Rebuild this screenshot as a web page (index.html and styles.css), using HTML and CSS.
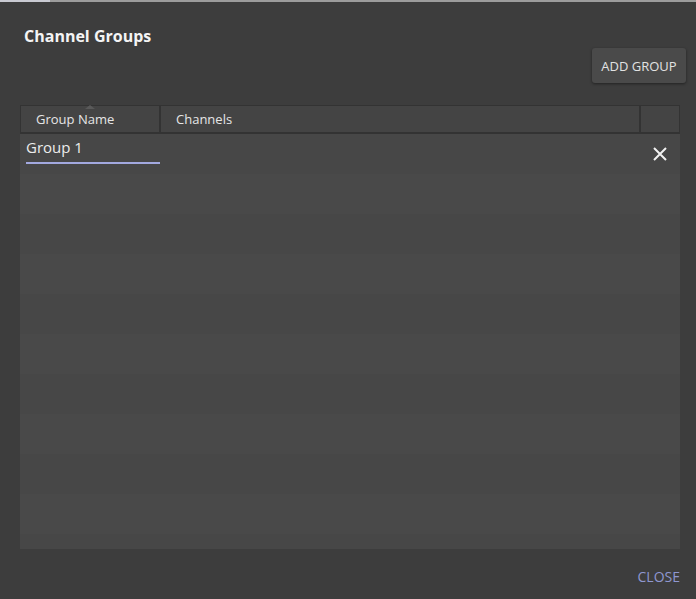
FILE: index.html
```html
<!DOCTYPE html>
<html lang="en">
<head>
	<meta charset="UTF-8">
	<title>Channel Groups</title>
	<link rel="stylesheet" href="styles.css">
</head>
<body>
	<div class="backdrop">
		<div class="backdrop-left"></div>
	</div>
	<div class="dialog">
		<div class="dialog-title">Channel Groups</div>
		<div class="toolbar">
			<button class="btn-add">ADD GROUP</button>
		</div>

		<div class="grid">
			<div class="grid-head">
				<div class="col col-name">Group Name<span class="sort-arrow"></span></div>
				<div class="col col-channels">Channels</div>
				<div class="col col-actions"></div>
			</div>
			<div class="grid-body">
				<div class="grid-row">
					<div class="cell-name">
						<input class="name-input" type="text" value="Group 1">
					</div>
					<div class="cell-channels"></div>
					<div class="cell-actions">
						<svg width="14" height="14" viewBox="0 0 14 14">
							<path d="M1 1 L13 13 M13 1 L1 13" stroke="#f2f2f2" stroke-width="2" fill="none"/>
						</svg>
					</div>
				</div>
			</div>
		</div>

		<div class="dialog-footer">
			<button class="btn-close">CLOSE</button>
		</div>
	</div>
</body>
</html>
```

FILE: styles.css
```css
html, body {
	margin: 0;
	padding: 0;
	height: 100%;
	background-color: #3c3c3c;
	font-family: "Open Sans", "Noto Sans", sans-serif;
	overflow: hidden;
}
.backdrop {
	height: 2px;
	background-color: #9c9c9c;
	display: flex;
}
.backdrop-left {
	width: 50px;
	background-color: #c9cad2;
}
.dialog {
	height: 597px;
	display: flex;
	flex-direction: column;
	background-color: #3d3d3d;
	box-sizing: border-box;
	padding: 0 10px 0 20px;
}
.dialog-title {
	margin: 24px 0 0 4px;
	font-size: 16px;
	font-weight: bold;
	color: #f4f4f4;
	line-height: 20px;
}
.toolbar {
	display: flex;
	justify-content: flex-end;
	margin-top: 2px;
}
.btn-add {
	width: 94px;
	height: 35px;
	background-color: #4a4a4a;
	border: none;
	border-radius: 3px;
	box-shadow: 0 1px 3px rgba(0, 0, 0, 0.45);
	color: #e2e2e2;
	font-family: inherit;
	font-size: 13px;
	padding: 0;
}
.grid {
	margin-top: 22px;
	width: 660px;
	height: 444px;
	display: flex;
	flex-direction: column;
	background-color: #474747;
}
.grid-head {
	display: flex;
	height: 26px;
	background-color: #444444;
	border-top: 1px solid #333333;
	border-bottom: 2px solid #333333;
	font-size: 13px;
	color: #e6e6e6;
}
.col {
	display: flex;
	align-items: center;
	box-sizing: border-box;
	border-right: 2px solid #333333;
	position: relative;
}
.col-name {
	width: 141px;
	padding-left: 15px;
	border-left: 1px solid #333333;
}
.col-channels {
	width: 480px;
	padding-left: 15px;
}
.col-actions {
	flex: 1;
	border-right: 1px solid #333333;
}
.sort-arrow {
	position: absolute;
	left: 64px;
	top: -1px;
	width: 0;
	height: 0;
	border-left: 5px solid transparent;
	border-right: 5px solid transparent;
	border-bottom: 4px solid #5a5a5a;
}
.grid-body {
	flex: 1;
	background: repeating-linear-gradient(to bottom, #474747 0, #474747 40px, #494949 40px, #494949 80px);
}
.grid-row {
	display: flex;
	height: 36px;
	align-items: flex-start;
}
.cell-name {
	width: 140px;
	padding: 2px 0 0 6px;
}
.name-input {
	width: 134px;
	box-sizing: border-box;
	background: transparent;
	border: none;
	border-bottom: 2px solid #a3a9e0;
	color: #ececec;
	font-family: inherit;
	font-size: 15px;
	padding: 0 0 5px 0;
	outline: none;
}
.cell-channels {
	flex: 1;
}
.cell-actions {
	width: 40px;
	padding: 10px 0 0 13px;
	box-sizing: border-box;
}
.dialog-footer {
	display: flex;
	justify-content: flex-end;
	padding-right: 6px;
	margin-top: 18px;
}
.btn-close {
	background: transparent;
	border: none;
	padding: 0;
	color: #8f97d0;
	font-family: inherit;
	font-size: 14px;
}
```
